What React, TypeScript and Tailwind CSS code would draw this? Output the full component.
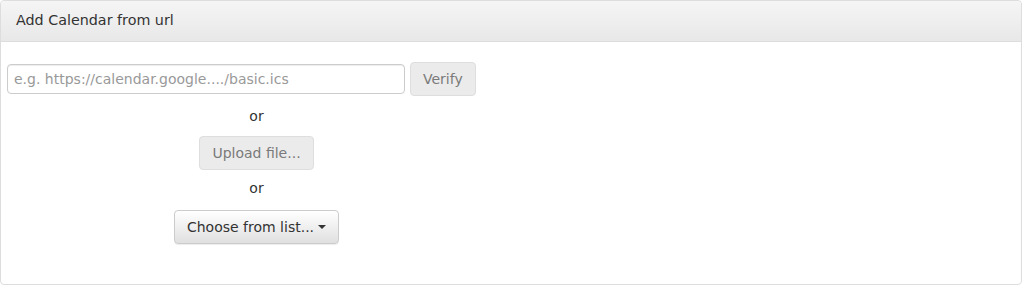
import React from "react";

const font = { fontFamily: '"DejaVu Sans", sans-serif' };

const App = () => {
  return (
    <div className="w-[1022px] h-[285px] bg-white" style={font}>
      <div className="h-full border border-[#dddddd] rounded-[4px] flex flex-col text-[14px] text-[#333333]">
        <div className="h-[41px] shrink-0 px-[15px] flex items-center border-b border-[#dddddd] rounded-t-[4px] bg-gradient-to-b from-[#f5f5f5] to-[#e8e8e8] text-[14.3px]">
          Add Calendar from url
        </div>
        <div className="pt-[20px] w-[511px] flex flex-col">
          <div className="flex items-center gap-[5px] pl-[6px] h-[34px]">
            <input
              type="text"
              placeholder="e.g. https://calendar.google..../basic.ics"
              className="w-[398px] h-[30px] px-[6px] border border-[#cccccc] rounded-[4px] shadow-[inset_0_1px_1px_rgba(0,0,0,0.075)] placeholder:text-[#999999] text-[14px] outline-none"
              style={font}
            />
            <button
              disabled
              className="h-[34px] px-[12px] border border-[#dedede] rounded-[4px] bg-[#ebebeb] text-[#7a7a7a] text-[14px]"
              style={font}
            >
              Verify
            </button>
          </div>
          <div className="flex flex-col items-center">
            <div className="mt-[10px] h-[20px] leading-[20px]">or</div>
            <button
              disabled
              className="mt-[10px] h-[34px] px-[12px] border border-[#dedede] rounded-[4px] bg-[#ebebeb] text-[#7a7a7a] text-[14px]"
              style={font}
            >
              Upload file...
            </button>
            <div className="mt-[8px] h-[20px] leading-[20px]">or</div>
            <button
              className="mt-[12px] h-[34px] px-[12px] border border-[#cccccc] rounded-[4px] bg-gradient-to-b from-white to-[#e0e0e0] text-[#333333] text-[14px] flex items-center shadow-[inset_0_1px_0_rgba(255,255,255,0.15),0_1px_1px_rgba(0,0,0,0.075)]"
              style={font}
            >
              Choose from list...
              <span className="ml-[4px] w-0 h-0 border-t-[4px] border-t-[#333333] border-x-[4px] border-x-transparent" />
            </button>
          </div>
        </div>
      </div>
    </div>
  );
};

export default App;
